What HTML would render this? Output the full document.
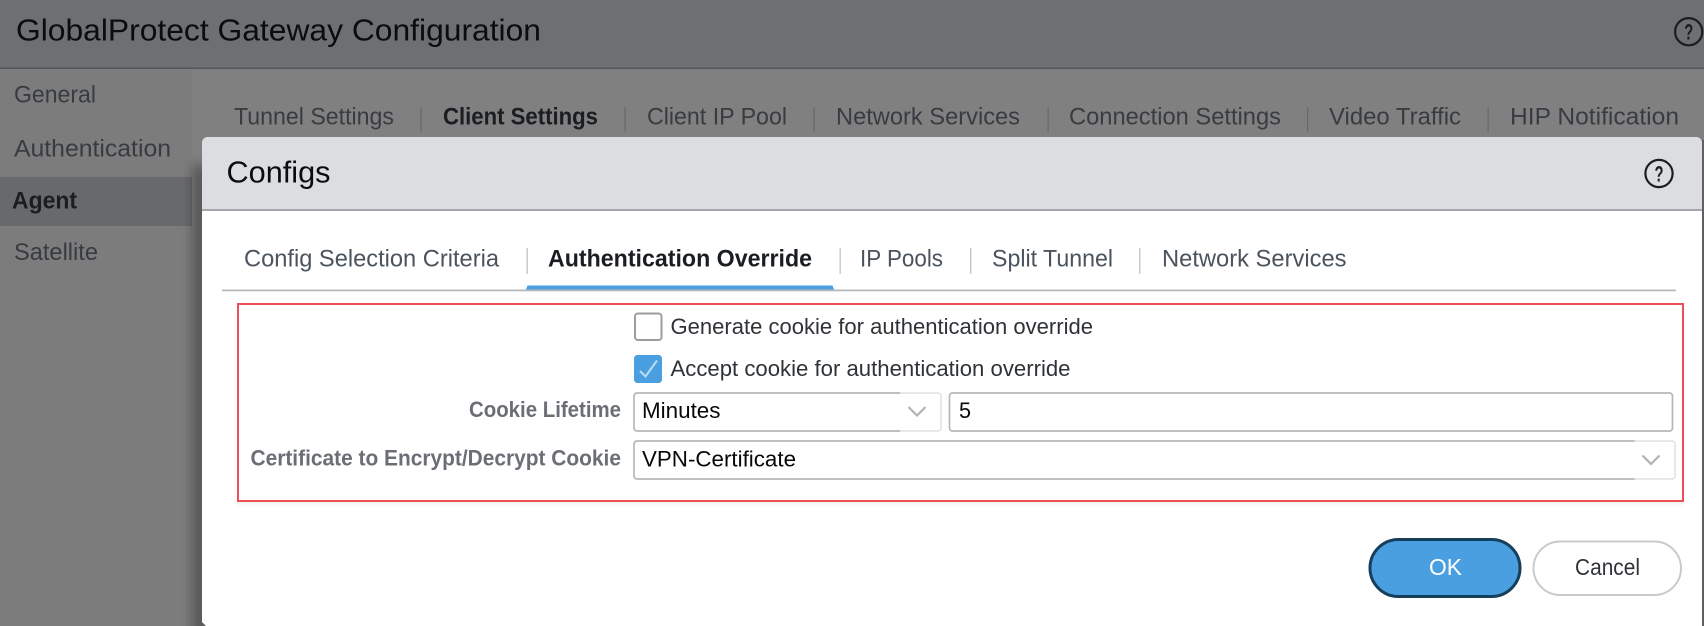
<!DOCTYPE html>
<html lang="en">
<head>
<meta charset="utf-8">
<title>Configs</title>
<style>
html,body{margin:0;padding:0;width:1704px;height:626px;overflow:hidden;background:#808080}
svg{display:block}
text{font-family:"Liberation Sans",sans-serif;white-space:pre}
.m{font-size:24px;fill:#383c41}
.b{font-size:24px;fill:#1a1d21;font-weight:700}
.d{font-size:24px;fill:#4b545d}
.t{font-size:22.500px;fill:#2f3337}
.l{font-size:22.500px;fill:#6b6f75;font-weight:700}
.v{font-size:22.500px;fill:#080808}
</style>
</head>
<body>
<svg xmlns="http://www.w3.org/2000/svg" width="1704" height="626" viewBox="0 0 1704 626">
<defs>
<filter id="blur" x="-300%" y="-10%" width="700%" height="120%"><feGaussianBlur stdDeviation="6"/></filter>
<linearGradient id="bs" x1="0" x2="0" y1="0" y2="1"><stop offset="0" stop-color="#000" stop-opacity=".05"/><stop offset="1" stop-color="#000" stop-opacity="0"/></linearGradient>
</defs>
<rect width="1704" height="626" fill="#808080"/>
<rect width="1704" height="68" fill="#6e6f71"/>
<rect y="67.500" width="1704" height="1.600" fill="#54575a"/>
<rect y="69" width="192" height="557" fill="#7c7c7c"/>
<rect y="177" width="192" height="49" fill="#68696b"/>

<text x="16" y="40.500" font-size="31" fill="#0b0c0d" textLength="525" lengthAdjust="spacingAndGlyphs">GlobalProtect Gateway Configuration</text>

<text x="14" y="102.500" class="m" textLength="82" lengthAdjust="spacingAndGlyphs">General</text>
<text x="14" y="156.500" class="m" textLength="157" lengthAdjust="spacingAndGlyphs">Authentication</text>
<text x="12" y="208.500" class="b" textLength="65" lengthAdjust="spacingAndGlyphs">Agent</text>
<text x="14" y="260" class="m" textLength="84" lengthAdjust="spacingAndGlyphs">Satellite</text>

<text x="234" y="124.500" class="m" textLength="160" lengthAdjust="spacingAndGlyphs">Tunnel Settings</text>
<rect x="420.500" y="107" width="1.200" height="25" fill="#666869"/>
<text x="443" y="124.500" class="b" textLength="155" lengthAdjust="spacingAndGlyphs">Client Settings</text>
<rect x="624.500" y="107" width="1.200" height="25" fill="#666869"/>
<text x="647" y="124.500" class="m" textLength="140" lengthAdjust="spacingAndGlyphs">Client IP Pool</text>
<rect x="813.500" y="107" width="1.200" height="25" fill="#666869"/>
<text x="836" y="124.500" class="m" textLength="184" lengthAdjust="spacingAndGlyphs">Network Services</text>
<rect x="1047.500" y="107" width="1.200" height="25" fill="#666869"/>
<text x="1069" y="124.500" class="m" textLength="212" lengthAdjust="spacingAndGlyphs">Connection Settings</text>
<rect x="1307" y="107" width="1.200" height="25" fill="#666869"/>
<text x="1329" y="124.500" class="m" textLength="132" lengthAdjust="spacingAndGlyphs">Video Traffic</text>
<rect x="1487.500" y="107" width="1.200" height="25" fill="#666869"/>
<text x="1510" y="124.500" class="m" textLength="169" lengthAdjust="spacingAndGlyphs">HIP Notification</text>

<circle cx="1688.700" cy="31.700" r="13.600" fill="none" stroke="#1c1d1f" stroke-width="2.200"/>
<text x="1684.200" y="39.500" font-size="22" font-weight="700" fill="#1c1d1f" textLength="9" lengthAdjust="spacingAndGlyphs">?</text>

<!-- dialog shadow -->
<rect x="194" y="165" width="12" height="480" fill="#000" fill-opacity=".42" filter="url(#blur)"/>
<rect x="1702" y="140" width="2" height="486" fill="#606062"/>
<!-- dialog -->
<path d="M202 143a6 6 0 0 1 6-6H1696a6 6 0 0 1 6 6V626H206l-4-4Z" fill="#fff"/>
<path d="M202 209.500V143a6 6 0 0 1 6-6H1696a6 6 0 0 1 6 6V209.500Z" fill="#dcdde0"/>
<rect x="202" y="209" width="1500" height="2" fill="#a4a6a9"/>
<text x="226.500" y="182.500" font-size="31" fill="#0b0c0d" textLength="104" lengthAdjust="spacingAndGlyphs">Configs</text>
<circle cx="1659" cy="173.500" r="13.600" fill="none" stroke="#1c1d1f" stroke-width="2.200"/>
<text x="1654.500" y="181.300" font-size="22" font-weight="700" fill="#1c1d1f" textLength="9" lengthAdjust="spacingAndGlyphs">?</text>

<text x="244" y="266.500" class="d" textLength="255" lengthAdjust="spacingAndGlyphs">Config Selection Criteria</text>
<rect x="526.500" y="248" width="1.400" height="26" fill="#c6c8ca"/>
<text x="548" y="266.500" class="b" textLength="264" lengthAdjust="spacingAndGlyphs">Authentication Override</text>
<rect x="839.500" y="248" width="1.400" height="26" fill="#c6c8ca"/>
<text x="860" y="266.500" class="d" textLength="83" lengthAdjust="spacingAndGlyphs">IP Pools</text>
<rect x="970" y="248" width="1.400" height="26" fill="#c6c8ca"/>
<text x="992" y="266.500" class="d" textLength="121" lengthAdjust="spacingAndGlyphs">Split Tunnel</text>
<rect x="1139" y="248" width="1.400" height="26" fill="#c6c8ca"/>
<text x="1162" y="266.500" class="d" textLength="184.500" lengthAdjust="spacingAndGlyphs">Network Services</text>
<rect x="222" y="289.500" width="1454" height="1.800" fill="#b7b8ba"/>
<path d="M526 289.500l1.500-4H832.500l1.500 4Z" fill="#4a9fe0"/>

<!-- highlight box -->
<rect x="237" y="502" width="1447" height="6" fill="url(#bs)"/>
<rect x="238" y="304" width="1445" height="197" fill="none" stroke="#ee4f56" stroke-width="2"/>

<rect x="635" y="313.500" width="26.500" height="26.500" rx="3" fill="#fff" stroke="#9b9d9f" stroke-width="2"/>
<text x="670.500" y="334" class="t" textLength="422.500" lengthAdjust="spacingAndGlyphs">Generate cookie for authentication override</text>
<rect x="634" y="355" width="28" height="28" rx="3.500" fill="#4a9fe0"/>
<path d="M640 371l5.500 5.500 11.500-16" fill="none" stroke="#bcdcf5" stroke-width="2"/>
<text x="670.500" y="376" class="t" textLength="400" lengthAdjust="spacingAndGlyphs">Accept cookie for authentication override</text>

<text x="469" y="417" class="l" textLength="152" lengthAdjust="spacingAndGlyphs">Cookie Lifetime</text>
<text x="250.500" y="465.500" class="l" textLength="370.500" lengthAdjust="spacingAndGlyphs">Certificate to Encrypt/Decrypt Cookie</text>

<!-- select 1 -->
<rect x="898" y="393" width="43" height="38" rx="3" fill="#fff" stroke="#dfe0e1" stroke-width="1.500"/>
<rect x="634" y="393" width="267" height="38" fill="#fff" rx="3"/>
<path d="M900 393H637a3 3 0 0 0-3 3V428a3 3 0 0 0 3 3H900" fill="none" stroke="#b5b7b9" stroke-width="1.700"/>
<path d="M908.500 407l8.500 8.500 8.500-8.500" fill="none" stroke="#b0b2b4" stroke-width="2.200"/>
<text x="642" y="418" class="v" textLength="78.500" lengthAdjust="spacingAndGlyphs">Minutes</text>
<!-- input -->
<rect x="949.500" y="393" width="723" height="38" rx="3" fill="#fff" stroke="#b5b7b9" stroke-width="1.700"/>
<text x="959" y="418" class="v" textLength="12" lengthAdjust="spacingAndGlyphs">5</text>
<!-- select 2 -->
<rect x="1632" y="441" width="43" height="38" rx="3" fill="#fff" stroke="#dfe0e1" stroke-width="1.500"/>
<rect x="634" y="441" width="1001" height="38" fill="#fff" rx="3"/>
<path d="M1634.500 441H637a3 3 0 0 0-3 3V476a3 3 0 0 0 3 3H1634.500" fill="none" stroke="#b5b7b9" stroke-width="1.700"/>
<path d="M1642.500 455.500l8.500 8.500 8.500-8.500" fill="none" stroke="#b0b2b4" stroke-width="2.200"/>
<text x="642" y="466.500" class="v" textLength="154" lengthAdjust="spacingAndGlyphs">VPN-Certificate</text>

<!-- buttons -->
<rect x="1370" y="539.500" width="150" height="57" rx="28.500" fill="#4a9fe0" stroke="#163f5c" stroke-width="3"/>
<text x="1429" y="575" font-size="23" fill="#fff" textLength="33" lengthAdjust="spacingAndGlyphs">OK</text>
<rect x="1533.500" y="541.500" width="147.500" height="53.500" rx="26.700" fill="#fff" stroke="#c9cacc" stroke-width="2"/>
<text x="1575" y="575" font-size="23" fill="#2f3337" textLength="65" lengthAdjust="spacingAndGlyphs">Cancel</text>
</svg>
</body>
</html>
